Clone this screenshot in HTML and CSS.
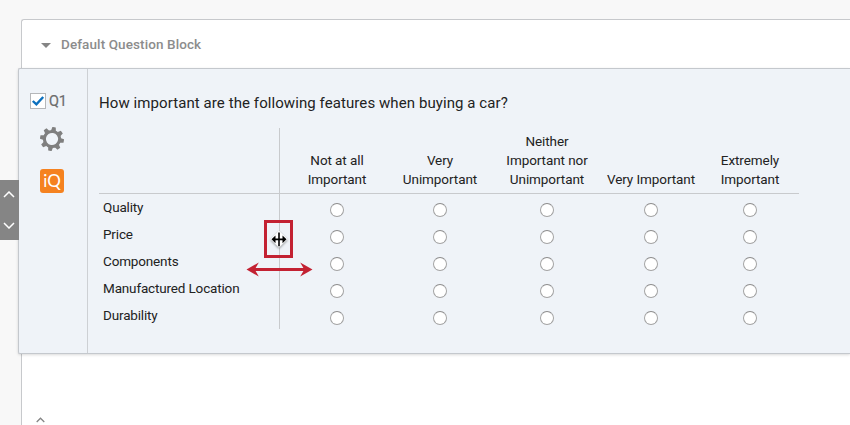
FILE: index.html
```html
<!DOCTYPE html>
<html lang="en">
<head>
<meta charset="utf-8">
<title>Survey Editor</title>
<link rel="stylesheet" href="styles.css">
</head>
<body>
<main class="block">
  <header class="block-header">
    <svg class="caret" width="10" height="5" viewBox="0 0 10 5"><path d="M0 0h10L5 5z" fill="#858585"/></svg>
    <span class="block-title">Default Question Block</span>
  </header>
  <section class="question">
    <aside class="side">
      <div class="qid">
        <svg width="16" height="16" viewBox="0 0 16 16"><rect x=".5" y=".5" width="15" height="15" fill="#fff" stroke="#b5b7ba"/><path d="M2.8 8l3.6 3.4L13.2 4" fill="none" stroke="#0b70bf" stroke-width="2.4"/></svg>
        <span class="qnum">Q1</span>
      </div>
      <svg class="gear" width="24" height="24" viewBox="-12 -12 24 24">
        <g fill="#7f7f7f" transform="rotate(10)">
          <circle r="7.6" fill="none" stroke="#7f7f7f" stroke-width="3"/>
          <g id="teeth"><path d="M-2.5-8l.8-4h3.4l.8 4z"/><path d="M-2.5 8l.8 4h3.4l.8-4z"/><path d="M-8-2.5l-4 .8v3.4l4 .8z"/><path d="M8-2.5l4 .8v3.4l-4 .8z"/></g>
          <use href="#teeth" transform="rotate(45)"/>
        </g>
      </svg>
      <div class="iq">iQ</div>
    </aside>
    <div class="content">
      <h1 class="prompt">How important are the following features when buying a car?</h1>
      <div class="matrix">
        <div class="row head"><span class="label"></span><span class="cell first">Not at all<br>Important</span><span class="cell">Very<br>Unimportant</span><span class="cell">Neither<br>Important nor<br>Unimportant</span><span class="cell">Very Important</span><span class="cell">Extremely<br>Important</span></div>
        <div class="row"><span class="label">Quality</span><span class="cell first"><i class="radio"></i></span><span class="cell"><i class="radio"></i></span><span class="cell"><i class="radio"></i></span><span class="cell"><i class="radio"></i></span><span class="cell"><i class="radio"></i></span></div>
        <div class="row"><span class="label">Price</span><span class="cell first"><i class="radio"></i></span><span class="cell"><i class="radio"></i></span><span class="cell"><i class="radio"></i></span><span class="cell"><i class="radio"></i></span><span class="cell"><i class="radio"></i></span></div>
        <div class="row"><span class="label">Components</span><span class="cell first"><i class="radio"></i></span><span class="cell"><i class="radio"></i></span><span class="cell"><i class="radio"></i></span><span class="cell"><i class="radio"></i></span><span class="cell"><i class="radio"></i></span></div>
        <div class="row"><span class="label">Manufactured Location</span><span class="cell first"><i class="radio"></i></span><span class="cell"><i class="radio"></i></span><span class="cell"><i class="radio"></i></span><span class="cell"><i class="radio"></i></span><span class="cell"><i class="radio"></i></span></div>
        <div class="row"><span class="label">Durability</span><span class="cell first"><i class="radio"></i></span><span class="cell"><i class="radio"></i></span><span class="cell"><i class="radio"></i></span><span class="cell"><i class="radio"></i></span><span class="cell"><i class="radio"></i></span></div>
      </div>
    </div>
  </section>
  <svg class="collapse" width="9" height="6" viewBox="0 0 9 6"><path d="M.7 5l3.8-3.8L8.3 5" fill="none" stroke="#858585" stroke-width="1.3"/></svg>
</main>
<nav class="mover">
  <svg width="12" height="7" viewBox="0 0 12 7"><path d="M1 6l5-5 5 5" fill="none" stroke="#fff" stroke-width="1.5"/></svg>
  <svg width="12" height="7" viewBox="0 0 12 7"><path d="M1 1l5 5 5-5" fill="none" stroke="#fff" stroke-width="1.5"/></svg>
</nav>
<svg class="resize" width="70" height="60" viewBox="244 218 70 60">
  <rect x="265.5" y="221.5" width="26" height="35" fill="none" stroke="#c32132" stroke-width="3"/>
  <path class="pointer" d="M271 239.3l8-8 8 8-8 8z" fill="#fff" stroke="#fff" stroke-width="1"/>
  <path d="M271.5 239.3l4-3.9v3h2.7v-6h1.6v6h2.7v-3l4 3.9-4 3.9v-3h-2.7v6h-1.6v-6h-2.7v3z" fill="#000"/>
  <path d="M246.5 269.5l12.3-7-3.2 5.5h47.8l-3.2-5.5 12.3 7-12.3 7 3.2-5.5h-47.8l3.2 5.5z" fill="#c32132"/>
</svg>
</body>
</html>
```

FILE: styles.css
```css
* { box-sizing: border-box; }
body {
  margin: 0;
  height: 425px;
  padding: 19px 0 0 21px;
  overflow: hidden;
  position: relative;
  background: #f8f8f8;
  color: #222;
  font-family: Roboto, "Liberation Sans", sans-serif;
  font-size: 13.5px;
}
svg { display: block; flex: none; }
.block {
  height: 406px;
  border: 1px solid #c7c9cc;
  border-right: 0;
  border-bottom: 0;
  border-radius: 3px 0 0 0;
  background: #fff;
}
.block-header {
  height: 48px;
  padding: 0 0 0 19px;
  display: flex;
  align-items: center;
  gap: 10px;
  color: #8c8c8c;
}
.caret { margin-top: 3px; }
.block-title { padding-bottom: 1px; font-weight: 500; letter-spacing: .1px; }
.question {
  height: 286px;
  margin-left: -4px;
  display: flex;
  border: 1px solid #c4c8cd;
  border-right: 0;
  border-radius: 2px 0 0 2px;
  background: #eff3f8;
  box-shadow: 0 1px 3px rgba(0, 0, 0, .15);
}
.side {
  width: 69px;
  padding: 23px 0 0 11px;
  border-right: 1px solid #cdd0d4;
}
.qid { display: flex; align-items: center; gap: 3px; height: 18px; }
.qnum { font-size: 14.5px; letter-spacing: -.3px; color: #6c6c6c; -webkit-text-stroke: .2px; }
.gear { margin: 17px 0 0 10px; }
.iq {
  width: 24px;
  height: 24px;
  margin: 18px 0 0 10px;
  border-radius: 3px;
  background: #f58220;
  color: #fff;
  font: 17px/24px Lato, sans-serif;
  text-align: center;
}
.content { padding: 24px 0 0 11px; }
.prompt {
  height: 35px;
  margin: 0;
  font-size: 15px;
  font-weight: 400;
  line-height: 20px;
  letter-spacing: .08px;
  white-space: nowrap;
}
.matrix { width: 700px; }
.row {
  height: 27px;
  display: grid;
  grid-template-columns: 181px 107px 106px 108px 100px 98px;
}
.head { height: 66px; border-bottom: 1px solid #c8cacd; }
.label {
  padding-left: 4px;
  border-right: 1px solid #c8cacd;
  line-height: 27px;
  letter-spacing: -.16px;
}
.cell { display: flex; justify-content: center; padding-top: 9px; }
.first { padding-left: 7px; }
.head .cell {
  align-items: flex-end;
  padding-top: 0;
  padding-bottom: 4px;
  line-height: 19px;
  letter-spacing: -.08px;
  text-align: center;
  white-space: nowrap;
}
.radio {
  width: 14px;
  height: 14px;
  border: 1px solid #a3a3a3;
  border-top-color: #8c8c8c;
  border-radius: 50%;
  background: #fff;
}
.collapse { margin: 63px 0 0 14px; }
.mover {
  position: absolute;
  left: 0;
  top: 180px;
  width: 19px;
  height: 60px;
  padding: 11px 0 11px 3px;
  display: flex;
  flex-direction: column;
  justify-content: space-between;
  background: #858585;
}
.resize { position: absolute; left: 244px; top: 218px; }
.pointer { filter: drop-shadow(0 1px 1px rgba(0, 0, 0, .4)); }
```
